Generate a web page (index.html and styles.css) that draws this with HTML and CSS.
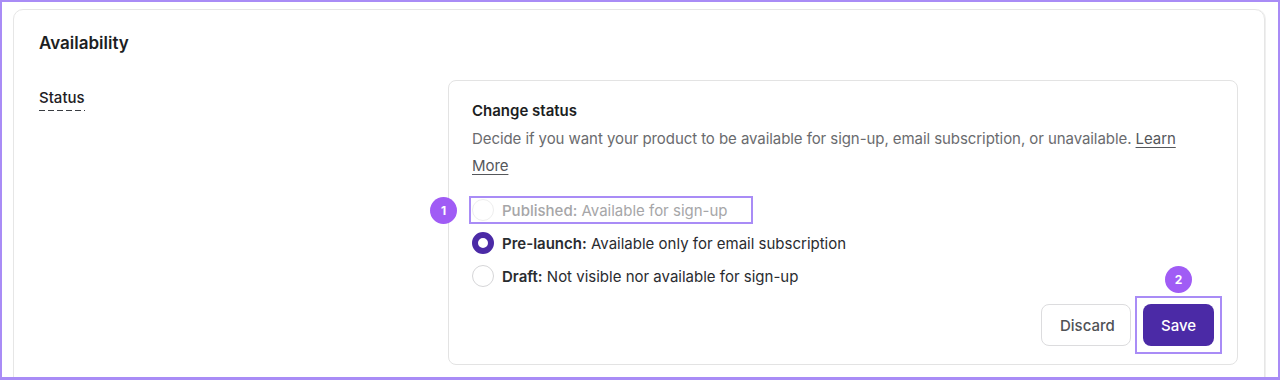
FILE: index.html
```html
<!DOCTYPE html>
<html lang="en">
<head>
<meta charset="utf-8">
<title>Availability</title>
<link rel="stylesheet" href="styles.css">
</head>
<body>
<div class="frame">
  <section class="card">
    <h2 class="card-title">Availability</h2>
    <div class="field">
      <div class="field-label"><span class="dashed">Status</span></div>
      <div class="panel">
        <h3 class="panel-title">Change status</h3>
        <p class="panel-desc">Decide if you want your product to be available for sign-up, email subscription, or unavailable. <a class="link" href="#">Learn More</a></p>
        <div class="options">
          <div class="annot annot-1">
            <span class="badge badge-1">1</span>
            <label class="option option-disabled">
              <span class="radio radio-disabled"></span>
              <span><b>Published:</b> Available for sign-up</span>
            </label>
          </div>
          <label class="option">
            <span class="radio radio-checked"></span>
            <span><b>Pre-launch:</b> Available only for email subscription</span>
          </label>
          <label class="option">
            <span class="radio"></span>
            <span><b>Draft:</b> Not visible nor available for sign-up</span>
          </label>
        </div>
        <div class="actions">
          <button class="btn btn-secondary" type="button">Discard</button>
          <div class="annot annot-2">
            <span class="badge badge-2">2</span>
            <button class="btn btn-primary" type="button">Save</button>
          </div>
        </div>
      </div>
    </div>
  </section>
</div>
</body>
</html>
```
FILE: styles.css
```css
* { box-sizing: border-box; }
html, body { margin: 0; padding: 0; background: #ffffff; }
body {
  font-family: Inter, "Noto Sans", "Liberation Sans", sans-serif;
  color: #1e2024;
}
.frame {
  width: 1280px;
  height: 380px;
  border: 2px solid #a98cf6;
  border-bottom-width: 3px;
  overflow: hidden;
  padding: 7px 13px 0 11px;
}
.card {
  border: 1px solid #e6e6e6;
  border-radius: 10px;
  height: 460px;
  padding: 21px 26px 0 25px;
  box-shadow: 1px 0 0 #efefef;
}
.card-title {
  margin: 0;
  font-size: 17px;
  line-height: 24px;
  font-weight: 600;
  color: #1c1e22;
}
.field {
  display: grid;
  grid-template-columns: 409px 1fr;
  margin-top: 25px;
}
.field-label {
  padding-top: 6px;
  font-size: 15px;
  line-height: 24px;
  font-weight: 500;
}
.dashed {
  display: inline-block;
  line-height: 20px;
  padding-bottom: 3px;
  background-image: linear-gradient(to right, #3a3d42 0 6px, transparent 6px 9px);
  background-size: 9px 1.5px;
  background-repeat: repeat-x;
  background-position: 0 100%;
}
.panel {
  border: 1px solid #e3e3e3;
  border-radius: 8px;
  padding: 18px 23px 18px 23px;
}
.panel-title {
  margin: 0;
  font-size: 15px;
  line-height: 24px;
  font-weight: 600;
  color: #1c1e22;
}
.panel-desc {
  margin: 2px 0 0 0;
  font-size: 15px;
  line-height: 27px;
  letter-spacing: -0.07px;
  color: #6a6b6e;
}
.link { color: #55575b; text-decoration: underline; text-underline-offset: 3px; }
.options {
  margin-top: 20px;
  display: flex;
  flex-direction: column;
  gap: 11px;
}
.option {
  display: flex;
  align-items: center;
  gap: 8px;
  height: 22px;
  font-size: 15px;
  color: #2a2c30;
}
.option b { font-weight: 600; }
.option-disabled { color: #a6a6a8; }
.option-disabled b { font-weight: 500; }
.radio {
  width: 22px;
  height: 22px;
  border-radius: 50%;
  border: 1.5px solid #d6d6d8;
  background: #fff;
  flex: none;
}
.radio-disabled { border-color: #eeeeee; }
.radio-checked { border: 6px solid #4b2aa6; }
.annot { position: relative; }
.annot-1 {
  align-self: flex-start;
  outline: 2px solid #a98cf6;
  outline-offset: 1px;
  padding-right: 22px;
}
.badge {
  position: absolute;
  width: 27px;
  height: 27px;
  border-radius: 50%;
  background: #a05cf5;
  color: #fff;
  font-size: 12px;
  font-weight: 700;
  display: flex;
  align-items: center;
  justify-content: center;
}
.badge-1 { left: -42px; top: -2px; }
.badge-2 { left: 22px; top: -38px; }
.actions {
  margin-top: 17px;
  display: flex;
  justify-content: flex-end;
  gap: 12px;
}
.btn {
  font-family: inherit;
  font-size: 15px;
  font-weight: 500;
  height: 42px;
  border-radius: 8px;
  padding: 0 18px;
  cursor: pointer;
}
.btn-secondary {
  background: #fff;
  border: 1px solid #dcdcde;
  color: #505256;
  width: 90px;
}
.btn-primary {
  background: #4b2aa6;
  border: none;
  color: #fff;
  width: 71px;
}
.annot-2 {
  outline: 2px solid #a98cf6;
  outline-offset: 6px;
  display: flex;
}
```
